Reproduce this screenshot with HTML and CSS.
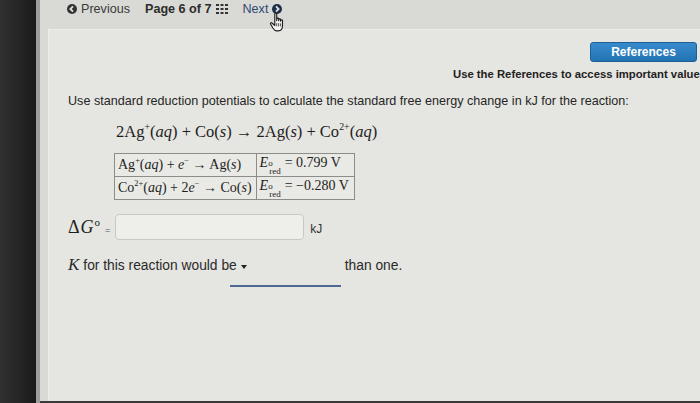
FILE: index.html
```html
<!DOCTYPE html>
<html>
<head>
<meta charset="utf-8">
<link rel="stylesheet" href="styles.css">
</head>
<body>
<div class="screen">
  <div class="bezel"></div>
  <div class="gap"></div>
  <div class="main">
    <div class="topbar">
      <span class="nav prev">
        <svg class="circ" width="10" height="10" viewBox="0 0 10 10"><circle cx="5" cy="5" r="5" fill="#333"/><path d="M6 2.4 L3.4 5 L6 7.6" fill="none" stroke="#e0e0dc" stroke-width="1.8"/></svg>
        Previous
      </span>
      <span class="page">Page 6 of 7
        <svg class="grid" width="12" height="10" viewBox="0 0 12 10"><g fill="#333"><rect x="0" y="0" width="3" height="2"/><rect x="4.5" y="0" width="3" height="2"/><rect x="9" y="0" width="3" height="2"/><rect x="0" y="4" width="3" height="2"/><rect x="4.5" y="4" width="3" height="2"/><rect x="9" y="4" width="3" height="2"/><rect x="0" y="8" width="3" height="2"/><rect x="4.5" y="8" width="3" height="2"/><rect x="9" y="8" width="3" height="2"/></g></svg>
      </span>
      <span class="nav next">Next
        <span class="nexticon">
          <svg class="circ" width="10" height="10" viewBox="0 0 10 10"><circle cx="5" cy="5" r="5" fill="#1f2f4a"/><path d="M4 2.4 L6.6 5 L4 7.6" fill="none" stroke="#e0e0dc" stroke-width="1.8"/></svg>
          <svg class="hand" width="18" height="21" viewBox="0 0 14 16"><path d="M4.5 1.2 C4.5 0.4 6 0.4 6 1.2 L6 6.5 L6 5.2 C6 4.4 7.5 4.4 7.5 5.2 L7.5 6.6 L7.5 5.8 C7.5 5 9 5 9 5.8 L9 7 L9 6.4 C9 5.7 10.5 5.7 10.5 6.4 L10.5 10.5 C10.5 12.8 9.3 14.5 7.2 14.5 L6 14.5 C4.6 14.5 3.8 13.6 3 12.3 L1.2 9.2 C0.8 8.5 1.7 7.8 2.3 8.4 L4.5 10.3 Z" fill="#f4f4f2" stroke="#222" stroke-width="0.9" stroke-linejoin="round"/><path d="M6 8.5 L6 11 M7.5 8.5 L7.5 11 M9 8.7 L9 11" stroke="#222" stroke-width="0.6"/></svg>
        </span>
      </span>
    </div>
    <div class="body">
      <div class="panel">
        <button class="refbtn">References</button>
        <div class="refnote">Use the References to access important values if needed for this question.</div>
        <p class="question">Use standard reduction potentials to calculate the standard free energy change in kJ for the reaction:</p>
        <div class="eq">2Ag<sup>+</sup><span class="sp">(<i>aq</i>)</span> + Co(<i>s</i>) → 2Ag(<i>s</i>) + Co<sup>2+</sup><span class="sp">(<i>aq</i>)</span></div>
        <table class="pot">
          <tr>
            <td class="half">Ag<sup>+</sup>(<i>aq</i>) + <i>e</i><sup>−</sup> → Ag(<i>s</i>)</td>
            <td><i>E</i><span class="ered"><span class="o">o</span><span class="r">red</span></span>= 0.799 V</td>
          </tr>
          <tr>
            <td class="half">Co<sup>2+</sup>(<i>aq</i>) + 2<i>e</i><sup>−</sup> → Co(<i>s</i>)</td>
            <td><i>E</i><span class="ered"><span class="o">o</span><span class="r">red</span></span>= −0.280 V</td>
          </tr>
        </table>
        <div class="answer">
          <span class="dg">Δ<i>G</i><sup>o</sup></span>
          <span class="eqs">=</span>
          <span class="input"></span>
          <span class="unit">kJ</span>
        </div>
        <div class="kline">
          <span class="kvar">K</span>
          <span class="ktext">for this reaction would be</span>
          <span class="caret"></span>
          <span class="blank"></span>
          <span class="than">than one.</span>
        </div>
      </div>
    </div>
  </div>
</div>
</body>
</html>
```
FILE: styles.css
```css
html, body {
  margin: 0;
  padding: 0;
  width: 700px;
  height: 403px;
  overflow: hidden;
}
.screen {
  display: flex;
  width: 700px;
  height: 403px;
  font-family: "Liberation Sans", Arial, sans-serif;
  color: #2a2a2a;
}
.bezel {
  width: 36px;
  background: linear-gradient(90deg, #303030 0%, #262626 50%, #1a1a1a 100%);
  flex: none;
}
.gap {
  width: 4px;
  background: #9c9c98;
  flex: none;
}
.main {
  flex: 1;
  min-width: 0;
  display: flex;
  flex-direction: column;
  background: #d9d9d5;
  border-bottom: 2px solid #3a3a38;
}
.topbar {
  height: 28px;
  flex: none;
  display: flex;
  align-items: flex-start;
  padding-top: 1px;
  padding-left: 27px;
  font-size: 12.6px;
  line-height: 16px;
}
.nav, .page {
  display: flex;
  align-items: center;
  height: 16px;
}
.prev {
  color: #3a3a3a;
}
.prev .circ {
  margin-right: 4px;
}
.page {
  margin-left: 15px;
  font-weight: bold;
  color: #2c2c2c;
}
.grid {
  margin-left: 4px;
}
.next {
  margin-left: 15px;
  color: #2e4a72;
}
.nexticon {
  position: relative;
  margin-left: 4px;
  display: inline-flex;
}
.hand {
  position: absolute;
  left: -3px;
  top: 8px;
}
.body {
  flex: 1;
  min-width: 0;
  display: flex;
  padding-left: 8px;
}
.panel {
  flex: 1;
  min-width: 0;
  background: #e5e5e1;
  border-left: 1px solid #eeeeea;
  border-top: 1px solid #ececea;
  padding-left: 19px;
  overflow: hidden;
  display: flex;
  flex-direction: column;
  align-items: flex-start;
}
.refbtn {
  align-self: flex-end;
  flex: none;
  width: 107px;
  height: 20px;
  margin: 12px 3px 0 0;
  border: 1px solid #1d5f96;
  border-radius: 3px;
  background: linear-gradient(#378bcc, #2273b4);
  color: #fff;
  font-family: "Liberation Sans", Arial, sans-serif;
  font-weight: bold;
  font-size: 12px;
  padding: 0;
}
.refnote {
  margin: 6px 0 0 385px;
  font-size: 11.3px;
  font-weight: bold;
  color: #222;
  white-space: nowrap;
}
.question {
  margin: 13px 0 0 0;
  font-size: 12.6px;
  line-height: 16px;
  color: #252525;
  white-space: nowrap;
}
.eq {
  margin: 14px 0 0 48px;
  font-family: "Liberation Serif", "Times New Roman", serif;
  font-size: 16.5px;
  line-height: 18px;
  color: #1e1e1e;
  white-space: nowrap;
}
.eq sup, .pot sup {
  font-size: 0.6em;
  vertical-align: 0.7em;
  line-height: 0;
}
.pot {
  margin: 12px 0 0 46px;
  border-collapse: collapse;
  font-family: "Liberation Serif", "Times New Roman", serif;
  font-size: 14px;
  color: #1e1e1e;
  background: #e9e9e5;
}
.pot td {
  border: 1px solid #8c8c88;
  height: 22px;
  padding: 0 5px 0 3px;
  white-space: nowrap;
}
.pot td.half {
  padding-right: 4px;
}
.ered {
  display: inline-block;
  vertical-align: -7px;
  margin-right: 4px;
  text-align: center;
}
.ered .o {
  display: block;
  font-size: 9px;
  line-height: 8px;
  text-align: left;
}
.ered .r {
  display: block;
  font-size: 9px;
  line-height: 9px;
  margin-left: 1px;
}
.answer {
  margin-top: 14px;
  display: flex;
  align-items: center;
  height: 26px;
}
.dg {
  font-family: "Liberation Serif", "Times New Roman", serif;
  font-size: 18px;
  color: #1e1e1e;
}
.dg i {
  margin-left: 1px;
}
.dg sup {
  font-size: 11px;
  vertical-align: 7px;
  line-height: 0;
  margin-left: 1px;
}
.eqs {
  font-size: 9px;
  margin: 6px 0 0 5px;
  color: #555;
}
.input {
  width: 187px;
  height: 24px;
  margin-left: 5px;
  border: 1px solid #c8c8c4;
  border-radius: 4px;
  background: #eeeeeb;
}
.unit {
  margin-left: 6px;
  font-size: 12px;
  color: #333;
  margin-top: 4px;
}
.kline {
  margin-top: 15px;
  display: flex;
  align-items: baseline;
  font-size: 13.8px;
}
.kvar {
  font-family: "Liberation Serif", "Times New Roman", serif;
  font-style: italic;
  font-size: 17px;
  margin-right: 4px;
}
.ktext {
  color: #2a2a2a;
}
.caret {
  width: 0;
  height: 0;
  border-left: 3.5px solid transparent;
  border-right: 3.5px solid transparent;
  border-top: 4px solid #222;
  margin-left: 4px;
  align-self: center;
  margin-top: 3px;
}
.blank {
  width: 111px;
  height: 2px;
  background: #4d6b92;
  margin-left: -17px;
  align-self: flex-end;
  margin-bottom: -12px;
}
.than {
  margin-left: 4px;
  color: #2a2a2a;
}
```
